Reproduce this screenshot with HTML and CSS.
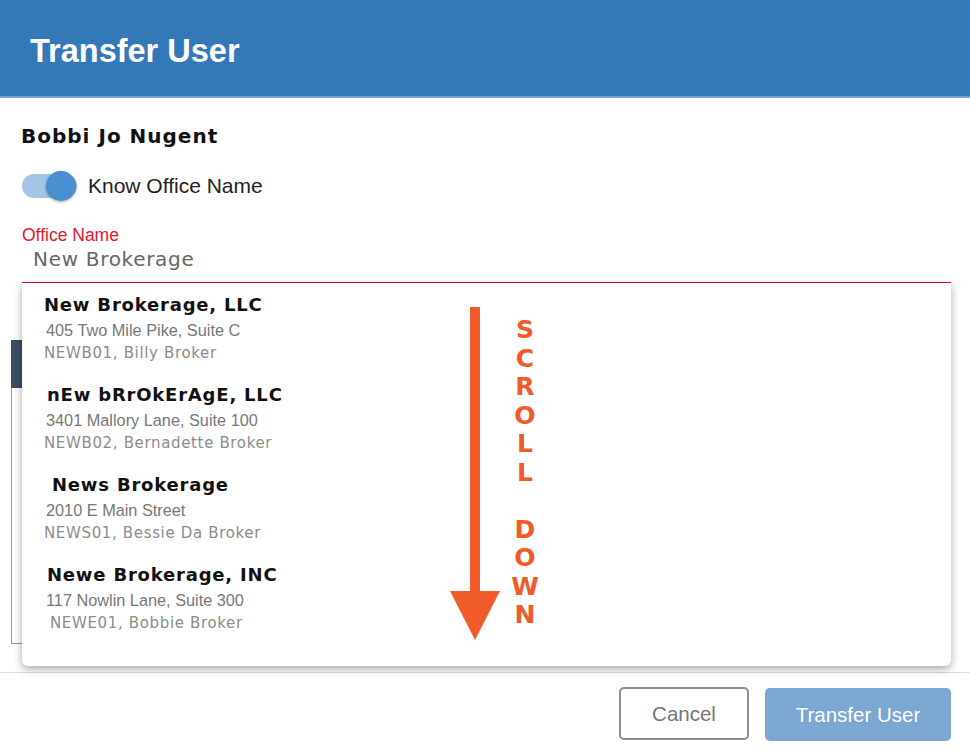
FILE: index.html
```html
<!DOCTYPE html>
<html lang="en">
<head>
<meta charset="utf-8">
<title>Transfer User</title>
<link rel="stylesheet" href="styles.css">
</head>
<body>
<div class="dialog">
  <header class="header">
    <h1 class="title">Transfer User</h1>
  </header>
  <main class="content">
    <h2 class="user-name">Bobbi Jo Nugent</h2>
    <div class="toggle-row">
      <span class="toggle"><span class="toggle-thumb"></span></span>
      <span class="toggle-label">Know Office Name</span>
    </div>
    <div class="field">
      <div class="field-label">Office Name</div>
      <div class="field-value">New Brokerage</div>
      <div class="dropdown">
        <div class="option">
          <div class="opt-title">New Brokerage, LLC</div>
          <div class="opt-address">405 Two Mile Pike, Suite C</div>
          <div class="opt-code">NEWB01, Billy Broker</div>
        </div>
        <div class="option">
          <div class="opt-title shift-s">nEw bRrOkErAgE, LLC</div>
          <div class="opt-address">3401 Mallory Lane, Suite 100</div>
          <div class="opt-code">NEWB02, Bernadette Broker</div>
        </div>
        <div class="option">
          <div class="opt-title shift-l">News Brokerage</div>
          <div class="opt-address">2010 E Main Street</div>
          <div class="opt-code">NEWS01, Bessie Da Broker</div>
        </div>
        <div class="option">
          <div class="opt-title shift-s">Newe Brokerage, INC</div>
          <div class="opt-address">117 Nowlin Lane, Suite 300</div>
          <div class="opt-code shift-m">NEWE01, Bobbie Broker</div>
        </div>
        <svg class="scroll-arrow" width="50" height="333" viewBox="0 0 50 333" aria-hidden="true">
          <rect x="20" y="0" width="10" height="290" fill="#f15a29"/>
          <polygon points="0,284 50,284 25,333" fill="#f15a29"/>
        </svg>
        <div class="scroll-text">S
C
R
O
L
L

D
O
W
N</div>
      </div>
    </div>
    <div class="table-box">
      <div class="table-head"></div>
    </div>
  </main>
  <footer class="footer">
    <button class="btn btn-cancel" type="button">Cancel</button>
    <button class="btn btn-primary" type="button">Transfer User</button>
  </footer>
</div>
</body>
</html>
```
FILE: styles.css
```css
* { box-sizing: border-box; }

body {
  margin: 0;
  background: #ffffff;
  font-family: "Liberation Sans", Arial, sans-serif;
}

.dialog {
  width: 970px;
  height: 754px;
  display: flex;
  flex-direction: column;
  overflow: hidden;
}

.header {
  height: 98px;
  flex: none;
  background: #3479b7;
  border-bottom: 2px solid #76a5d3;
  padding: 35px 0 0 30px;
}

.title {
  margin: 0;
  color: #ffffff;
  font-family: "Liberation Sans", Arial, sans-serif;
  font-weight: 700;
  font-size: 32.5px;
  line-height: 32.5px;
}

.content {
  height: 574px;
  flex: none;
  padding: 0 19px 0 11px;
  position: relative;
}

.user-name {
  margin: 28px 0 0 10px;
  font-family: "DejaVu Sans", sans-serif;
  font-weight: 700;
  font-size: 20px;
  line-height: 20px;
  letter-spacing: 1px;
  color: #111111;
}

.toggle-row {
  margin: 25px 0 0 11px;
  height: 30px;
  display: flex;
  align-items: center;
}

.toggle {
  position: relative;
  width: 55px;
  height: 24px;
  border-radius: 12px;
  background: #a3c5e6;
  flex: none;
}

.toggle-thumb {
  position: absolute;
  right: 1px;
  top: -3px;
  width: 30px;
  height: 30px;
  border-radius: 50%;
  background: #4a8fd0;
  box-shadow: 0 1px 3px rgba(0, 0, 0, 0.35);
}

.toggle-label {
  margin-left: 11px;
  font-size: 21px;
  line-height: 30px;
  color: #222222;
}

.field {
  position: relative;
  margin: 24px 0 0 11px;
  border-bottom: 2px solid #d0112b;
}

.field-label {
  font-size: 17.5px;
  line-height: 20px;
  color: #e3172f;
}

.field-value {
  margin-top: 2px;
  padding: 0 0 11px 11px;
  font-family: "DejaVu Sans", sans-serif;
  font-size: 20px;
  line-height: 24px;
  letter-spacing: 0.7px;
  color: #666666;
}

.dropdown {
  position: absolute;
  top: calc(100% + 1px);
  left: 0;
  right: 0;
  height: 383px;
  background: #ffffff;
  border-radius: 0 0 6px 6px;
  box-shadow: 0 3px 8px rgba(0, 0, 0, 0.35);
  z-index: 2;
}

.option {
  padding: 9px 0 9px 22px;
}

.opt-title {
  font-family: "DejaVu Sans", sans-serif;
  font-weight: 700;
  font-size: 18px;
  line-height: 26px;
  letter-spacing: 0.8px;
  color: #111111;
}

.opt-address {
  padding-left: 2px;
  font-size: 16.3px;
  line-height: 24px;
  color: #777777;
}

.opt-code {
  font-family: "DejaVu Sans", sans-serif;
  font-size: 15px;
  line-height: 22px;
  letter-spacing: 0.65px;
  color: #8c8c8c;
}

.shift-s { margin-left: 3px; }
.shift-m { margin-left: 6px; }
.shift-l { margin-left: 8px; }

.scroll-arrow {
  position: absolute;
  left: 428px;
  top: 24px;
}

.scroll-text {
  position: absolute;
  left: 483px;
  top: 33px;
  width: 40px;
  white-space: pre-line;
  text-align: center;
  font-family: "DejaVu Sans", sans-serif;
  font-weight: 700;
  font-size: 25px;
  line-height: 28.5px;
  color: #f15a29;
}

.table-box {
  margin-top: 56px;
  height: 304px;
  border: 1px solid #9a9a9a;
}

.table-head {
  height: 48px;
  margin: -1px -1px 0 -1px;
  background: #3d4f66;
}

.footer {
  flex: 1;
  border-top: 1px solid #dddddd;
  display: flex;
  justify-content: flex-end;
  align-items: flex-start;
  gap: 16px;
  padding: 14px 19px 0 0;
}

.btn {
  height: 53px;
  border-radius: 5px;
  font-family: "Liberation Sans", Arial, sans-serif;
  font-size: 20.5px;
  cursor: pointer;
}

.btn-cancel {
  width: 130px;
  background: #ffffff;
  border: 2.5px solid #8d8d8d;
  color: #777777;
}

.btn-primary {
  width: 186px;
  margin-top: 1px;
  background: #7ba7d2;
  border: none;
  color: #ffffff;
}
```
